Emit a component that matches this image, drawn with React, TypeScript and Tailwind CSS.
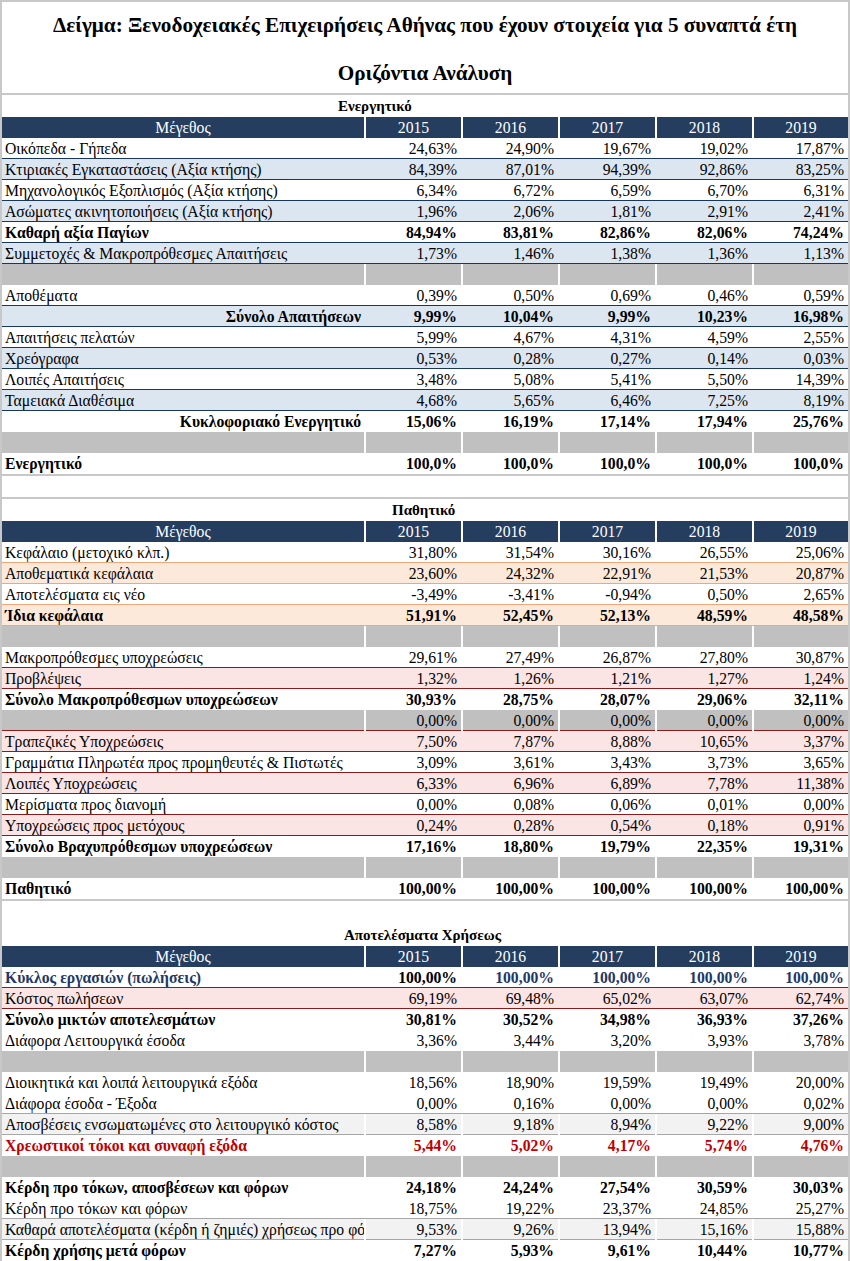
type Row = {
  label?: string;
  vals?: string[];
  bg?: string;
  line?: string;
  bold?: boolean;
  right?: boolean;
  text?: string;
  firstValText?: string;
  seps?: boolean;
  gray?: boolean;
};

const COLS = 'grid grid-cols-[362px_97px_97px_97px_97px_1fr]';
const YEARS = ['2015', '2016', '2017', '2018', '2019'];

const BLUE = 'bg-[#dce6f1]';
const PEACH = 'bg-[#fde9d9]';
const PINK = 'bg-[#fbe4e4]';
const LIGHT = 'bg-[#f2f2f2]';
const NAVY_LINE = 'border-b border-[#17375e]';
const ORANGE_LINE = 'border-b border-[#f0a878]';
const RED_LINE = 'border-b border-[#8b1a1a]';
const GRAY_LINE = 'border-b border-[#a6a6a6]';

const v = (s: string) => s.split(' ');

const assets: Row[] = [
  { label: 'Οικόπεδα - Γήπεδα', vals: v('24,63% 24,90% 19,67% 19,02% 17,87%'), line: NAVY_LINE },
  { label: 'Κτιριακές Εγκαταστάσεις (Αξία κτήσης)', vals: v('84,39% 87,01% 94,39% 92,86% 83,25%'), bg: BLUE, line: NAVY_LINE },
  { label: 'Μηχανολογικός Εξοπλισμός (Αξία κτήσης)', vals: v('6,34% 6,72% 6,59% 6,70% 6,31%'), line: NAVY_LINE },
  { label: 'Ασώματες ακινητοποιήσεις (Αξία κτήσης)', vals: v('1,96% 2,06% 1,81% 2,91% 2,41%'), bg: BLUE, line: NAVY_LINE },
  { label: 'Καθαρή αξία Παγίων', vals: v('84,94% 83,81% 82,86% 82,06% 74,24%'), bold: true, line: NAVY_LINE },
  { label: 'Συμμετοχές & Μακροπρόθεσμες Απαιτήσεις', vals: v('1,73% 1,46% 1,38% 1,36% 1,13%'), bg: BLUE, line: NAVY_LINE },
  { gray: true },
  { label: 'Αποθέματα', vals: v('0,39% 0,50% 0,69% 0,46% 0,59%'), line: NAVY_LINE },
  { label: 'Σύνολο Απαιτήσεων', vals: v('9,99% 10,04% 9,99% 10,23% 16,98%'), bg: BLUE, bold: true, right: true, line: NAVY_LINE },
  { label: 'Απαιτήσεις πελατών', vals: v('5,99% 4,67% 4,31% 4,59% 2,55%'), line: NAVY_LINE },
  { label: 'Χρεόγραφα', vals: v('0,53% 0,28% 0,27% 0,14% 0,03%'), bg: BLUE, line: NAVY_LINE },
  { label: 'Λοιπές Απαιτήσεις', vals: v('3,48% 5,08% 5,41% 5,50% 14,39%'), line: NAVY_LINE },
  { label: 'Ταμειακά Διαθέσιμα', vals: v('4,68% 5,65% 6,46% 7,25% 8,19%'), bg: BLUE, line: NAVY_LINE },
  { label: 'Κυκλοφοριακό Ενεργητικό', vals: v('15,06% 16,19% 17,14% 17,94% 25,76%'), bold: true, right: true },
  { gray: true },
  { label: 'Ενεργητικό', vals: v('100,0% 100,0% 100,0% 100,0% 100,0%'), bold: true },
];

const liabilities: Row[] = [
  { label: 'Κεφάλαιο (μετοχικό κλπ.)', vals: v('31,80% 31,54% 30,16% 26,55% 25,06%'), line: ORANGE_LINE },
  { label: 'Αποθεματικά κεφάλαια', vals: v('23,60% 24,32% 22,91% 21,53% 20,87%'), bg: PEACH, line: ORANGE_LINE },
  { label: 'Αποτελέσματα εις νέο', vals: v('-3,49% -3,41% -0,94% 0,50% 2,65%'), line: ORANGE_LINE },
  { label: 'Ίδια κεφάλαια', vals: v('51,91% 52,45% 52,13% 48,59% 48,58%'), bg: PEACH, bold: true, line: ORANGE_LINE },
  { gray: true },
  { label: 'Μακροπρόθεσμες υποχρεώσεις', vals: v('29,61% 27,49% 26,87% 27,80% 30,87%'), line: RED_LINE },
  { label: 'Προβλέψεις', vals: v('1,32% 1,26% 1,21% 1,27% 1,24%'), bg: PINK, line: RED_LINE },
  { label: 'Σύνολο Μακροπρόθεσμων υποχρεώσεων', vals: v('30,93% 28,75% 28,07% 29,06% 32,11%'), bold: true },
  { gray: true, label: '', vals: v('0,00% 0,00% 0,00% 0,00% 0,00%'), line: RED_LINE },
  { label: 'Τραπεζικές Υποχρεώσεις', vals: v('7,50% 7,87% 8,88% 10,65% 3,37%'), bg: PINK, line: RED_LINE },
  { label: 'Γραμμάτια Πληρωτέα προς προμηθευτές & Πιστωτές', vals: v('3,09% 3,61% 3,43% 3,73% 3,65%'), line: RED_LINE },
  { label: 'Λοιπές Υποχρεώσεις', vals: v('6,33% 6,96% 6,89% 7,78% 11,38%'), bg: PINK, line: RED_LINE },
  { label: 'Μερίσματα προς διανομή', vals: v('0,00% 0,08% 0,06% 0,01% 0,00%'), line: RED_LINE },
  { label: 'Υποχρεώσεις προς μετόχους', vals: v('0,24% 0,28% 0,54% 0,18% 0,91%'), bg: PINK, line: RED_LINE },
  { label: 'Σύνολο Βραχυπρόθεσμων υποχρεώσεων', vals: v('17,16% 18,80% 19,79% 22,35% 19,31%'), bold: true },
  { gray: true },
  { label: 'Παθητικό', vals: v('100,00% 100,00% 100,00% 100,00% 100,00%'), bold: true },
];

const results: Row[] = [
  { label: 'Κύκλος εργασιών (πωλήσεις)', vals: v('100,00% 100,00% 100,00% 100,00% 100,00%'), bold: true, text: 'text-[#1f3864]', firstValText: 'text-black', line: RED_LINE },
  { label: 'Κόστος πωλήσεων', vals: v('69,19% 69,48% 65,02% 63,07% 62,74%'), bg: PINK, line: RED_LINE },
  { label: 'Σύνολο μικτών αποτελεσμάτων', vals: v('30,81% 30,52% 34,98% 36,93% 37,26%'), bold: true },
  { label: 'Διάφορα Λειτουργικά έσοδα', vals: v('3,36% 3,44% 3,20% 3,93% 3,78%') },
  { gray: true },
  { label: 'Διοικητικά και λοιπά λειτουργικά εξόδα', vals: v('18,56% 18,90% 19,59% 19,49% 20,00%') },
  { label: 'Διάφορα έσοδα - Έξοδα', vals: v('0,00% 0,16% 0,00% 0,00% 0,02%'), line: GRAY_LINE },
  { label: 'Αποσβέσεις ενσωματωμένες στο λειτουργικό κόστος', vals: v('8,58% 9,18% 8,94% 9,22% 9,00%'), bg: LIGHT, seps: true, line: GRAY_LINE },
  { label: 'Χρεωστικοί τόκοι και συναφή εξόδα', vals: v('5,44% 5,02% 4,17% 5,74% 4,76%'), bold: true, text: 'text-[#c00000]' },
  { gray: true },
  { label: 'Κέρδη προ τόκων, αποσβέσεων και φόρων', vals: v('24,18% 24,24% 27,54% 30,59% 30,03%'), bold: true },
  { label: 'Κέρδη προ τόκων και φόρων', vals: v('18,75% 19,22% 23,37% 24,85% 25,27%'), line: GRAY_LINE },
  { label: 'Καθαρά αποτελέσματα (κέρδη ή ζημιές) χρήσεως προ φόρων', vals: v('9,53% 9,26% 13,94% 15,16% 15,88%'), bg: LIGHT, seps: true, line: GRAY_LINE },
  { label: 'Κέρδη χρήσης μετά φόρων', vals: v('7,27% 5,93% 9,61% 10,44% 10,77%'), bold: true },
];

function DataRow({ row }: { row: Row }) {
  const bg = row.gray ? 'bg-[#c0c0c0]' : row.bg ?? 'bg-white';
  const sep = row.gray || row.seps ? 'border-l-2 border-white' : '';
  return (
    <div className={`${COLS} h-[21px] leading-[21px] ${bg} ${row.line ?? ''} ${row.bold ? 'font-bold' : ''} ${row.text ?? 'text-black'}`}>
      <div className={`pl-[3px] pr-[3px] whitespace-nowrap overflow-hidden ${row.right ? 'text-right' : ''}`}>{row.label}</div>
      {(row.vals ?? ['', '', '', '', '']).map((val, i) => (
        <div key={i} className={`pr-[4px] text-right whitespace-nowrap ${sep} ${i === 0 && row.firstValText ? row.firstValText : ''}`}>
          {val}
        </div>
      ))}
    </div>
  );
}

function Section({ title, rows, titleClass, className }: { title: string; rows: Row[]; titleClass: string; className: string }) {
  return (
    <div className={className}>
      <div className={`h-[22px] leading-[22px] font-bold text-[15px] ${titleClass}`}>{title}</div>
      <div className={`${COLS} h-[21px] leading-[21px] bg-[#253d5f] text-white`}>
        <div className="text-center">Μέγεθος</div>
        {YEARS.map((y) => (
          <div key={y} className="text-center border-l-2 border-white">
            {y}
          </div>
        ))}
      </div>
      {rows.map((row, i) => (
        <DataRow key={i} row={row} />
      ))}
    </div>
  );
}

export default function App() {
  return (
    <div className="w-[850px] bg-white font-['Liberation_Serif','Times_New_Roman',serif] text-[15.7px] text-black">
      <div className="border-x-2 border-t-2 border-[#c8c8c8]">
        <div className="h-[93px] border-b-2 border-[#c8c8c8] flex flex-col items-center font-bold text-[21.2px]">
          <div className="pt-[10px] leading-[26px]">Δείγμα: Ξενοδοχειακές Επιχειρήσεις Αθήνας που έχουν στοιχεία για 5 συναπτά έτη</div>
          <div className="pt-[22px] leading-[26px]">Οριζόντια Ανάλυση</div>
        </div>
        <Section title="Ενεργητικό" rows={assets} titleClass="pl-[336px]" className="border-b-2 border-[#c8c8c8]" />
        <div className="h-[21px]" />
        <Section title="Παθητικό" rows={liabilities} titleClass="pl-[390px]" className="border-y-2 border-[#c8c8c8]" />
        <div className="h-[23px]" />
        <Section title="Αποτελέσματα Χρήσεως" rows={results} titleClass="pl-[342px]" className="border-b-2 border-[#c8c8c8]" />
      </div>
    </div>
  );
}
